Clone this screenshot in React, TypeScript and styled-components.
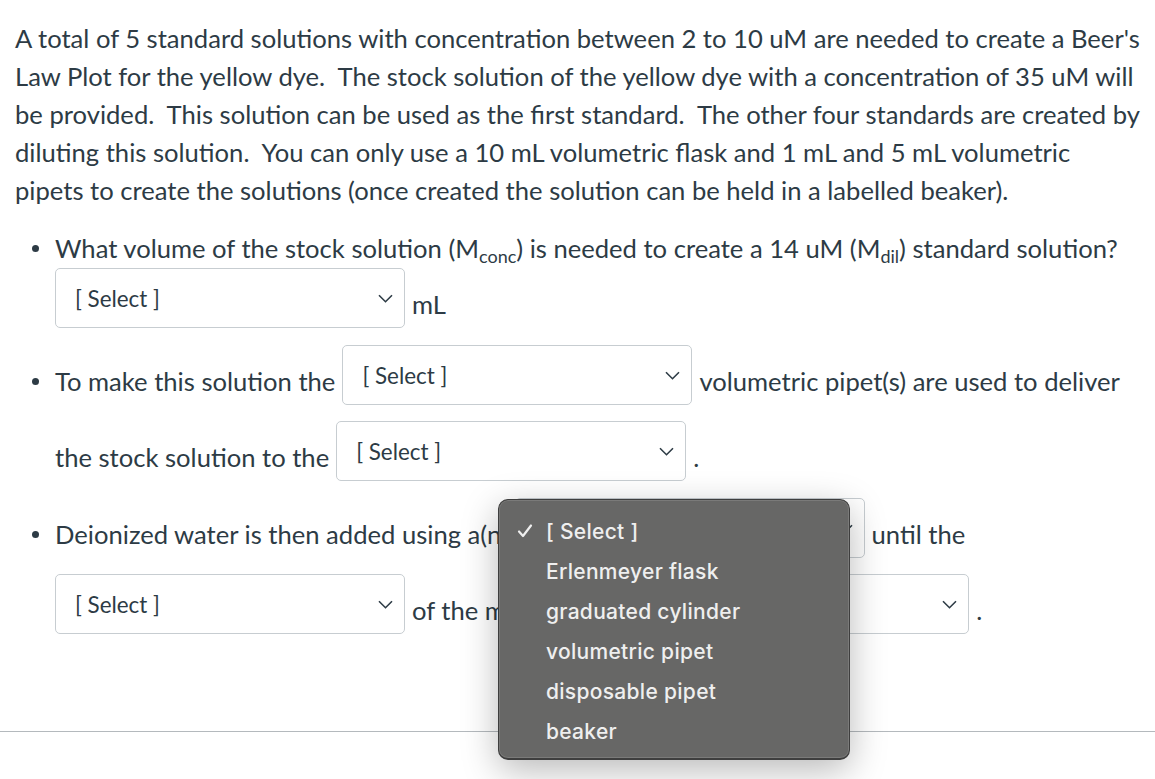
import styled, { createGlobalStyle } from 'styled-components'

const Global = createGlobalStyle`
  body {
    margin: 0;
    background: #ffffff;
  }
`

const Page = styled.div`
  position: relative;
  min-height: 779px;
  padding: 19px 15px 0;
  box-sizing: border-box;
  color: #2d3b45;
  font-family: Lato, 'Open Sans', sans-serif;
  font-size: 25.6px;
`

const Para = styled.p`
  margin: 0;
  line-height: 38px;
  white-space: nowrap;
`

const List = styled.ul`
  list-style: none;
  margin: 20px 0 0;
  padding: 0;
  display: flex;
  flex-direction: column;
  gap: 17px;
`

const Item = styled.li`
  display: flex;
`

const Bullet = styled.div<{ $tall?: boolean }>`
  width: 40px;
  height: ${p => (p.$tall ? '60px' : '38px')};
  padding-top: ${p => (p.$tall ? '12px' : '0')};
  box-sizing: border-box;
  display: flex;
  align-items: center;
  justify-content: center;
  &::before {
    content: '';
    width: 7px;
    height: 7px;
    border-radius: 50%;
    background: #2d3b45;
  }
`

const Body = styled.div<{ $gap: number }>`
  display: flex;
  flex-direction: column;
  gap: ${p => p.$gap}px;
`

const TextLine = styled.div`
  height: 39px;
  line-height: 38px;
  white-space: nowrap;
`

const Line = styled.div`
  display: flex;
  align-items: center;
  height: 60px;
  white-space: pre;
`

const Words = styled.span`
  padding-top: 12px;
`

const Sub = styled.sub`
  font-size: 18px;
  vertical-align: -5px;
  line-height: 0;
`

const SelectBox = styled.div`
  width: 350px;
  height: 60px;
  margin: 0 7px;
  box-sizing: border-box;
  border: 1px solid #c7cdd1;
  border-radius: 5px;
  background: #ffffff;
  padding: 0 11px 0 19px;
  display: flex;
  align-items: center;
  justify-content: space-between;
  font-size: 22.4px;
  flex-shrink: 0;
  &:first-child {
    margin-left: 0;
  }
`

const Chevron = () => (
  <svg width="15" height="9" viewBox="0 0 15 9" fill="none">
    <path d="M1 1.2 L7.5 7.7 L14 1.2" stroke="#2d3b45" strokeWidth="1.6" />
  </svg>
)

const Select = () => (
  <SelectBox>
    <span>[ Select ]</span>
    <Chevron />
  </SelectBox>
)

const Menu = styled.div`
  position: absolute;
  left: 498px;
  top: 499px;
  width: 352px;
  height: 261px;
  box-sizing: border-box;
  padding: 11px 0 0;
  background: #676766;
  border: 1px solid #3e3e3e;
  border-bottom-width: 2px;
  border-radius: 10px;
  box-shadow: 0 10px 36px rgba(0, 0, 0, 0.28), inset 0 0 0 1px #7a7a79;
  font-family: Inter, 'Liberation Sans', sans-serif;
  font-size: 21px;
  font-weight: 500;
  letter-spacing: 0.3px;
  color: #efefef;
`

const Option = styled.div`
  position: relative;
  height: 40px;
  display: flex;
  align-items: center;
  padding-left: 47px;
`

const Check = styled.svg`
  position: absolute;
  left: 18px;
  top: 12px;
`

const Rule = styled.hr`
  margin: 97px -15px 0;
  border: 0;
  border-top: 1px solid #b4b9bd;
  height: 0;
`

const options = [
  'Erlenmeyer flask',
  'graduated cylinder',
  'volumetric pipet',
  'disposable pipet',
  'beaker',
]

export default function App() {
  return (
    <>
      <Global />
      <Page>
        <Para>
          A total of 5 standard solutions with concentration between 2 to 10 uM are needed to create a Beer's
          <br />
          Law Plot for the yellow dye.{'\u00a0 '}The stock solution of the yellow dye with a concentration of 35 uM will
          <br />
          be provided.{'\u00a0 '}This solution can be used as the first standard.{'\u00a0 '}The other four standards are created by
          <br />
          diluting this solution.{'\u00a0 '}You can only use a 10 mL volumetric flask and 1 mL and 5 mL volumetric
          <br />
          pipets to create the solutions (once created the solution can be held in a labelled beaker).
        </Para>
        <List>
          <Item>
            <Bullet />
            <Body $gap={0}>
              <TextLine>
                What volume of the stock solution (M<Sub>conc</Sub>) is needed to create a 14 uM (M<Sub>dil</Sub>) standard solution?
              </TextLine>
              <Line>
                <Select />
                <Words>mL</Words>
              </Line>
            </Body>
          </Item>
          <Item>
            <Bullet $tall />
            <Body $gap={16}>
              <Line>
                <Words>To make this solution the</Words>
                <Select />
                <Words>volumetric pipet(s) are used to deliver</Words>
              </Line>
              <Line>
                <Words>the stock solution to the</Words>
                <Select />
                <Words>.</Words>
              </Line>
            </Body>
          </Item>
          <Item>
            <Bullet $tall />
            <Body $gap={16}>
              <Line>
                <Words>Deionized water is then added using a(n)</Words>
                <Select />
                <Words>until the</Words>
              </Line>
              <Line>
                <Select />
                <Words>of the meniscus is</Words>
                <Select />
                <Words>.</Words>
              </Line>
            </Body>
          </Item>
        </List>
        <Rule />
        <Menu>
          <Option>
            <Check width="16" height="16" viewBox="0 0 16 16" fill="none">
              <path d="M2 8.5 L6 13 L14 2.5" stroke="#efefef" strokeWidth="2.2" strokeLinecap="round" strokeLinejoin="round" />
            </Check>
            [ Select ]
          </Option>
          {options.map(o => (
            <Option key={o}>{o}</Option>
          ))}
        </Menu>
      </Page>
    </>
  )
}
